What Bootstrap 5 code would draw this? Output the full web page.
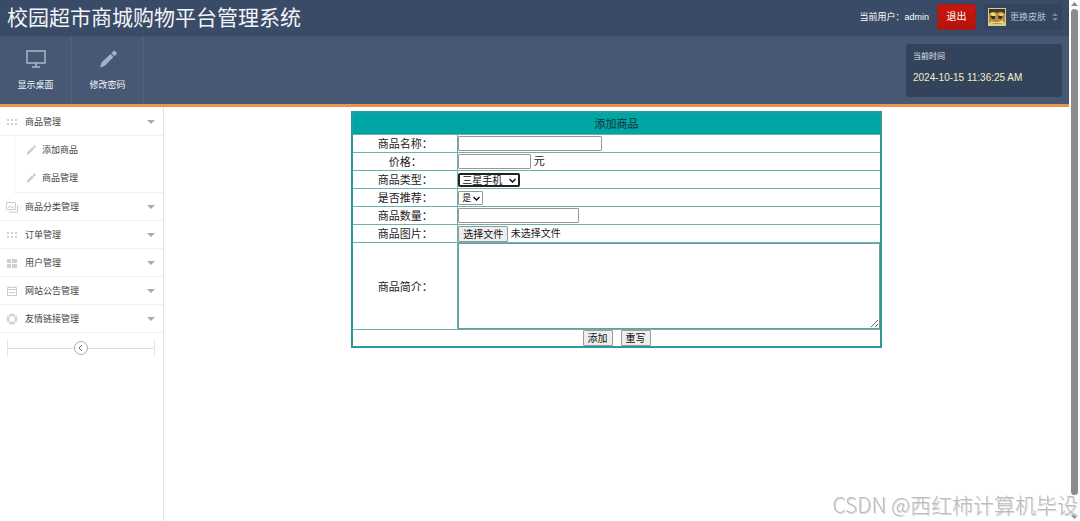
<!DOCTYPE html>
<html lang="zh-CN">
<head>
<meta charset="utf-8">
<meta name="viewport" content="width=device-width, initial-scale=1">
<title>校园超市商城购物平台管理系统</title>
<link href="https://cdn.jsdelivr.net/npm/bootstrap@5.3.0/dist/css/bootstrap.min.css" rel="stylesheet">
<style>
  body { font-family: "Liberation Sans", "Noto Sans CJK SC", sans-serif; font-size: 9px; line-height: 14px; color: #444; background: #fff; }
  a { text-decoration: none; color: inherit; }
  svg { display: block; }
  .topbar { height: 37px; background: #394b66; color: #fff; border-bottom: 1px solid #405370; padding: 0 7px; }
  .site-title { font-family: "Noto Sans CJK SC", sans-serif; font-size: 21px; line-height: 32px; font-weight: 400; color: #f2f5f9; }
  .exit-btn { width: 39px; height: 26px; font-size: 10px; line-height: 24px; padding: 0; color: #fff; background: linear-gradient(#c9160f, #b3140d); border: 1px solid #9a1d1c; border-radius: 2px; }
  .skin { width: 78px; height: 26px; padding: 0 4px; font-size: 9px; line-height: 14px; color: #b6c2d3; background: #34455e; border: 0; border-radius: 2px; white-space: nowrap; }
  .skin svg { flex-shrink: 0; }
  .toolbar { height: 70px; background: #465873; border-bottom: 3px solid #e9944a; }
  .tool { width: 72px; color: #f0f4f8; border-right: 1px solid #51637e; padding-top: 12px; gap: 9px; }
  .clock { width: 156px; height: 53px; margin: 7px 7px 0 0; padding: 6px 7px; background: #33435c; color: #e3e9f1; font-size: 8px; gap: 7px; border-radius: 2px; }
  .clock time { font-size: 10px; color: #f3efc0; }
  .side { width: 164px; border-right: 1px solid #e2e2e2; padding-top: 1px; }
  .side-link { height: 28px; padding: 0 8px 0 6px; border-bottom: 1px solid #f0f0f0; gap: 7px; color: #444; }
  .side-icon { width: 12px; }
  .side-sub { margin-left: 14px; border-left: 1px solid #f4f4f4; border-bottom: 1px solid #f0f0f0; }
  .side-sub a { height: 28px; padding-left: 11px; gap: 6px; }
  .fold { margin: 7px 8px 0 7px; height: 16px; border: solid #e4e4e4; border-width: 0 1px; }
  .fold-line { height: 1px; background: #dedede; }
  .fold button { width: 14px; height: 14px; padding: 0; border: 1px solid #aaa; border-radius: 50%; background: #fff; }
  .goods { max-width: 531px; border: 2px solid #2b9a9b; font-family: "Noto Sans CJK SC", sans-serif; font-size: 11px; line-height: 14px; color: #222; border-collapse: collapse; table-layout: fixed; margin-top: 4px; }
  .goods td, .goods th { height: 18px; padding: 0; border: 1px solid #6bb1ae; vertical-align: middle; font-weight: 400; }
  .goods thead th { height: 22px; background: #00a5a5; text-align: center; color: #17302f; }
  .goods tbody th { text-align: center; }
  .goods input, .goods select, .goods textarea { display: inline-block; vertical-align: middle; font-size: 9px; border: 1px solid #999; border-radius: 1px; padding: 0 2px; background: #fff; color: #111; }
  .goods input[type=text] { height: 15px; }
  .goods .w-name { width: 144px; }
  .goods .w-price { width: 73px; }
  .goods .w-count { width: 121px; }
  .goods select { appearance: none; height: 14px; line-height: 12px; padding: 0 0 0 3px; font-family: "Noto Sans CJK SC", sans-serif; background: #fff url("data:image/svg+xml,%3Csvg xmlns='http://www.w3.org/2000/svg' viewBox='0 0 7 5'%3E%3Cpath fill='none' stroke='%23111' stroke-width='1.5' d='M.5 1l3 3 3-3'/%3E%3C/svg%3E") no-repeat right 2px center / 7px 5px; }
  .goods .w-type { width: 62px; border: 2px solid #222; border-radius: 2px; line-height: 10px; font-size: 10px; padding-left: 2px; }
  .goods .w-rec { width: 25px; }
  .goods textarea { display: block; width: 100%; height: 86px; border-color: #6f9c9b; border-radius: 0; }
  .plain-btn { display: inline-block; vertical-align: middle; height: 16px; padding: 0 4px; font-size: 10px; line-height: 14px; color: #111; background: #eee; border: 1px solid #999; border-radius: 1px; }
  .file-note { font-size: 10px; }
  .pagebar { width: 11px; background: #fcfcfc; color: #8a8a8f; padding: 2px 0; gap: 3px; height: 100vh; position: sticky; top: 0; }
  .thumb { width: 7px; border-radius: 4px; background: #8a8a8f; margin-bottom: 17px; }
  .brand-mark { position: fixed; right: 2px; bottom: 1px; font-family: "Noto Sans CJK SC", sans-serif; font-size: 21px; line-height: 32px; font-weight: 300; color: #bdbdbd; text-shadow: 1px 1px 0 #dadada; white-space: nowrap; }
</style>
</head>
<body>
<svg width="0" height="0" class="position-absolute" aria-hidden="true">
  <defs>
    <symbol id="grid" viewBox="0 0 12 12"><path fill="#d2d2d2" d="M1 3h2v2H1zM5 3h2v2H5zM9 3h2v2H9zM1 7h2v2H1zM5 7h2v2H5zM9 7h2v2H9z"/></symbol>
    <symbol id="pencil" viewBox="0 0 18 18"><path d="M1 17.500l1.500-5L11.500 4l3 3L5.500 16zM12.300 3.200L14.500 1q.8-.6 1.500 0l1.500 1.500q.6.700 0 1.500l-2.200 2.200z"/></symbol>
    <symbol id="caret" viewBox="0 0 8 4"><path fill="#aaa" d="M0 0h8L4 4z"/></symbol>
  </defs>
</svg>
<div class="d-flex min-vh-100">
  <div class="flex-grow-1 d-flex flex-column">
    <header>
      <div class="topbar d-flex align-items-start justify-content-between">
        <h1 class="site-title m-0">校园超市商城购物平台管理系统</h1>
        <div class="d-flex align-items-center pt-1">
          <span>当前用户：admin</span>
          <button type="button" class="exit-btn ms-2">退出</button>
          <button type="button" class="skin d-flex align-items-center ms-2">
            <svg width="18" height="18" viewBox="0 0 18 18"><path fill="#d8c98d" d="M0 0h18v18H0z"/><path fill="#3a3a32" d="M1 1h16v5H1z"/><path fill="#b58c3a" d="M1 6q4-4 8-1 5-3 8 1v8q-8 4-16 0z"/><path fill="#f0dc7c" d="M2 6q4-3 6 1l-2 2zM10 6q4-2 6 1l-3 1zM3 13q6 3 12-1v3H3z"/><path fill="#32302c" d="M2 8h5v3H4zM10 8h5l-2 3h-2z"/></svg>
            <span class="ms-1 me-auto">更换皮肤</span>
            <svg width="6" height="8" viewBox="0 0 6 8"><path fill="#7586a0" d="M0 3l3-3 3 3zM0 5h6L3 8z"/></svg>
          </button>
        </div>
      </div>
      <div class="toolbar d-flex">
        <a href="#" class="tool d-flex flex-column align-items-center">
          <svg width="20" height="20" viewBox="0 0 20 20"><path fill="none" stroke="#a9b8cc" stroke-width="1.500" d="M1 2h18v12H1zM10 14v4M6 18h8"/></svg>
          <span>显示桌面</span>
        </a>
        <a href="#" class="tool d-flex flex-column align-items-center">
          <svg width="18" height="20" fill="#a3b1c4"><use href="#pencil"/></svg>
          <span>修改密码</span>
        </a>
        <div class="clock d-flex flex-column ms-auto">
          <span>当前时间</span>
          <time datetime="2024-10-15T11:36:25">2024-10-15 11:36:25 AM</time>
        </div>
      </div>
    </header>
    <div class="d-flex flex-grow-1">
      <nav class="side flex-shrink-0">
        <a href="#" class="side-link d-flex align-items-center"><svg class="side-icon" height="12"><use href="#grid"/></svg><span class="flex-grow-1">商品管理</span><svg width="8" height="4"><use href="#caret"/></svg></a>
        <ul class="side-sub list-unstyled mb-0">
          <li><a href="#" class="d-flex align-items-center"><svg width="10" height="10" fill="#ccc"><use href="#pencil"/></svg>添加商品</a></li>
          <li><a href="#" class="d-flex align-items-center"><svg width="10" height="10" fill="#ccc"><use href="#pencil"/></svg>商品管理</a></li>
        </ul>
        <a href="#" class="side-link d-flex align-items-center"><svg class="side-icon" height="12" viewBox="0 0 12 12"><path fill="none" stroke="#ccc" d="M.5 1.500h9v7h-9zM2.500 11h9V4M2 7l2-2 2 2 2-1"/></svg><span class="flex-grow-1">商品分类管理</span><svg width="8" height="4"><use href="#caret"/></svg></a>
        <a href="#" class="side-link d-flex align-items-center"><svg class="side-icon" height="12"><use href="#grid"/></svg><span class="flex-grow-1">订单管理</span><svg width="8" height="4"><use href="#caret"/></svg></a>
        <a href="#" class="side-link d-flex align-items-center"><svg class="side-icon" height="12" viewBox="0 0 12 12"><path fill="#d0d0d0" d="M1 2h4v4H1zM6 2h5v4H6zM1 7h4v4H1zM6 7h5v4H6z"/></svg><span class="flex-grow-1">用户管理</span><svg width="8" height="4"><use href="#caret"/></svg></a>
        <a href="#" class="side-link d-flex align-items-center"><svg class="side-icon" height="12" viewBox="0 0 12 12"><path fill="none" stroke="#ccc" d="M1.500 2.500h9v8h-9zM1 4.500h10M3 1v2M9 1v2M3 7.500h6"/></svg><span class="flex-grow-1">网站公告管理</span><svg width="8" height="4"><use href="#caret"/></svg></a>
        <a href="#" class="side-link d-flex align-items-center"><svg class="side-icon" height="12" viewBox="0 0 12 12"><circle cx="6" cy="6" r="4" fill="none" stroke="#d4d4d4" stroke-width="3"/><circle cx="6" cy="6" r="2.500" fill="#fff"/><path stroke="#fff" d="M2 2l2 2M10 2L8 4M2 10l2-2M10 10L8 8"/></svg><span class="flex-grow-1">友情链接管理</span><svg width="8" height="4"><use href="#caret"/></svg></a>
        <div class="fold d-flex align-items-center">
          <span class="fold-line flex-grow-1"></span>
          <button type="button" aria-label="收起" class="d-flex align-items-center justify-content-center"><svg width="6" height="6" viewBox="0 0 6 6"><path fill="none" stroke="#666" d="M4 0L1 3l3 3"/></svg></button>
          <span class="fold-line flex-grow-1"></span>
        </div>
      </nav>
      <main class="flex-grow-1">
        <form>
          <table class="goods w-100 mx-auto">
            <colgroup><col style="width:20%"><col></colgroup>
            <thead><tr><th colspan="2">添加商品</th></tr></thead>
            <tbody>
              <tr><th><label for="gname">商品名称：</label></th><td><input type="text" id="gname" class="w-name"></td></tr>
              <tr><th><label for="gprice">价格：</label></th><td><input type="text" id="gprice" class="w-price"> 元</td></tr>
              <tr><th><label for="gtype">商品类型：</label></th><td><select id="gtype" class="w-type"><option>三星手机</option></select></td></tr>
              <tr><th><label for="grec">是否推荐：</label></th><td><select id="grec" class="w-rec"><option>是</option><option>否</option></select></td></tr>
              <tr><th><label for="gcount">商品数量：</label></th><td><input type="text" id="gcount" class="w-count"></td></tr>
              <tr><th>商品图片：</th><td class="position-relative"><label for="gfile" class="plain-btn">选择文件</label> <span class="file-note">未选择文件</span><input type="file" id="gfile" class="visually-hidden"></td></tr>
              <tr><th><label for="gintro">商品简介：</label></th><td><textarea id="gintro"></textarea></td></tr>
              <tr><td colspan="2"><div class="d-flex justify-content-center gap-2"><button type="submit" class="plain-btn">添加</button><button type="reset" class="plain-btn">重写</button></div></td></tr>
            </tbody>
          </table>
        </form>
      </main>
    </div>
  </div>
  <div class="pagebar d-flex flex-column align-items-center flex-shrink-0" aria-hidden="true">
    <svg width="7" height="4" viewBox="0 0 7 4"><path fill="#8a8a8f" d="M0 4h7L3.500 0z"/></svg>
    <span class="thumb flex-grow-1"></span>
    <svg width="7" height="4" viewBox="0 0 7 4"><path fill="#8a8a8f" d="M0 0h7L3.500 4z"/></svg>
  </div>
</div>
<div class="brand-mark">CSDN @西红柿计算机毕设</div>
<script src="https://cdn.jsdelivr.net/npm/bootstrap@5.3.0/dist/js/bootstrap.bundle.min.js"></script>
</body>
</html>
